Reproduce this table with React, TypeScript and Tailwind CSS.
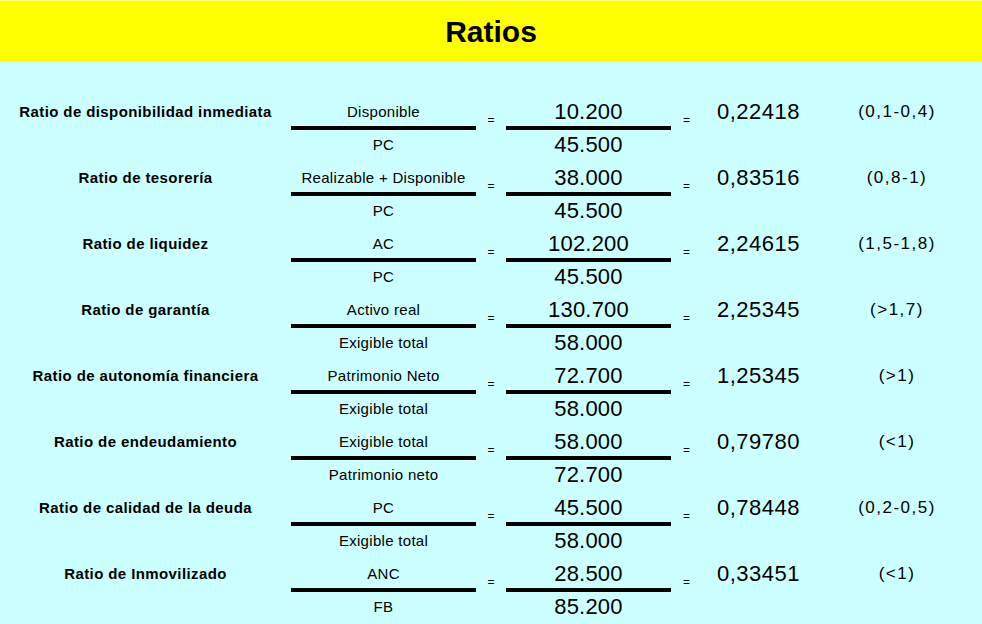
type Ratio = {
  name: string
  num: string
  den: string
  a: string
  b: string
  result: string
  range: string
}

const ratios: Ratio[] = [
  { name: 'Ratio de disponibilidad inmediata', num: 'Disponible', den: 'PC', a: '10.200', b: '45.500', result: '0,22418', range: '(0,1-0,4)' },
  { name: 'Ratio de tesorería', num: 'Realizable + Disponible', den: 'PC', a: '38.000', b: '45.500', result: '0,83516', range: '(0,8-1)' },
  { name: 'Ratio de liquidez', num: 'AC', den: 'PC', a: '102.200', b: '45.500', result: '2,24615', range: '(1,5-1,8)' },
  { name: 'Ratio de garantía', num: 'Activo real', den: 'Exigible total', a: '130.700', b: '58.000', result: '2,25345', range: '(>1,7)' },
  { name: 'Ratio de autonomía financiera', num: 'Patrimonio Neto', den: 'Exigible total', a: '72.700', b: '58.000', result: '1,25345', range: '(>1)' },
  { name: 'Ratio de endeudamiento', num: 'Exigible total', den: 'Patrimonio neto', a: '58.000', b: '72.700', result: '0,79780', range: '(<1)' },
  { name: 'Ratio de calidad de la deuda', num: 'PC', den: 'Exigible total', a: '45.500', b: '58.000', result: '0,78448', range: '(0,2-0,5)' },
  { name: 'Ratio de Inmovilizado', num: 'ANC', den: 'FB', a: '28.500', b: '85.200', result: '0,33451', range: '(<1)' },
]

function Fraction({ top, bottom, className }: { top: string; bottom: string; className: string }) {
  return (
    <div className="flex flex-col items-stretch text-center">
      <div className={`h-[30px] pt-[2px] leading-[28px] whitespace-nowrap ${className}`}>{top}</div>
      <div className="h-[4px] bg-black" />
      <div className={`h-[32px] leading-[30px] whitespace-nowrap ${className}`}>{bottom}</div>
    </div>
  )
}

function Equals() {
  return <div className="pt-[15px] text-center text-[12px] leading-[18px]">=</div>
}

function RatioRow({ r }: { r: Ratio }) {
  return (
    <div className="grid h-[66px] grid-cols-[291px_185px_30px_165px_31px_110px_170px]">
      <div className="h-[30px] pt-[2px] text-center text-[15px] font-bold leading-[28px] tracking-[0.4px] whitespace-nowrap">
        {r.name}
      </div>
      <Fraction top={r.num} bottom={r.den} className="text-[15px] tracking-[0.3px]" />
      <Equals />
      <Fraction top={r.a} bottom={r.b} className="text-[22px] tracking-[0.2px]" />
      <Equals />
      <div className="h-[30px] pt-[2px] pl-[15px] text-[22px] leading-[28px] tracking-[0.5px]">{r.result}</div>
      <div className="h-[30px] pt-[2px] text-center text-[17px] leading-[28px] tracking-[1.5px]">{r.range}</div>
    </div>
  )
}

export default function App() {
  return (
    <div className="flex h-[624px] w-[982px] flex-col overflow-hidden bg-[#ccffff] text-black [font-family:'Liberation_Sans',Arial,sans-serif]">
      {/* Header */}
      <div className="flex h-[62px] shrink-0 items-center justify-center border-t border-[#ffff80] bg-[#ffff00]">
        <h1 className="text-[30px] font-bold leading-none">Ratios</h1>
      </div>

      <div className="flex flex-col pt-[34px]">
        {ratios.map((r) => (
          <RatioRow key={r.name} r={r} />
        ))}
      </div>
    </div>
  )
}
